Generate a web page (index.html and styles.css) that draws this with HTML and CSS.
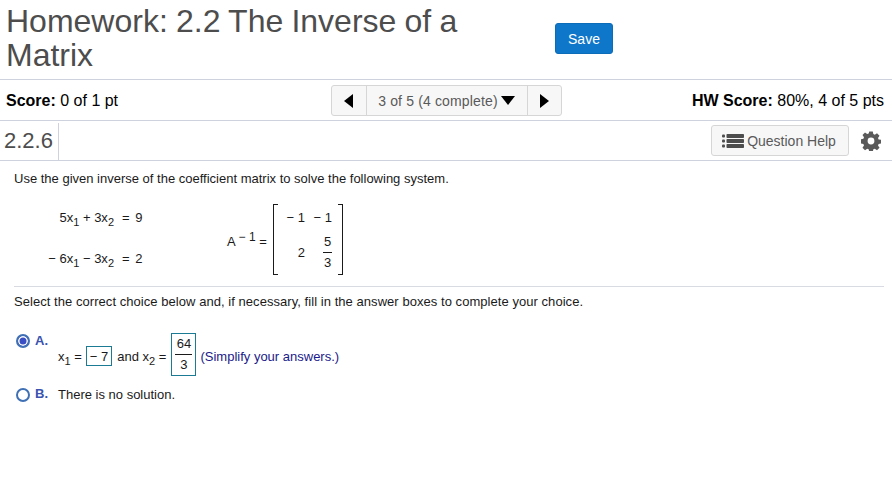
FILE: index.html
```html
<!DOCTYPE html>
<html lang="en">
<head>
    <meta charset="UTF-8">
    <title>Homework: 2.2 The Inverse of a Matrix</title>
    <link rel="stylesheet" href="styles.css">
</head>
<body>
    <div class="title-bar">
        <h1 class="hw-title">Homework: 2.2 The Inverse of a Matrix</h1>
        <button class="save-btn">Save</button>
    </div>
    <div class="score-bar">
        <div class="score"><b>Score:</b> 0 of 1 pt</div>
        <div class="pager">
            <button class="pager-btn"><svg width="9" height="14" viewBox="0 0 9 14"><path d="M9 0V14L0 7Z" fill="#000"/></svg></button>
            <button class="pager-mid">3 of 5 (4 complete)<svg width="14" height="9" viewBox="0 0 14 9"><path d="M0 0H14L7 9Z" fill="#000"/></svg></button>
            <button class="pager-btn"><svg width="9" height="14" viewBox="0 0 9 14"><path d="M0 0V14L9 7Z" fill="#000"/></svg></button>
        </div>
        <div class="score hw-score"><b>HW Score:</b> 80%, 4 of 5 pts</div>
    </div>
    <div class="question-bar">
        <div class="question-num">2.2.6</div>
        <button class="help-btn">
            <svg width="22" height="14" viewBox="0 0 22 14" fill="#4d4d4d">
                <rect x="0" y="0.5" width="3" height="3" rx="1"/>
                <rect x="0" y="5.5" width="3" height="3" rx="1"/>
                <rect x="0" y="10.5" width="3" height="3" rx="1"/>
                <rect x="4.5" y="0" width="17.5" height="4" rx="0.8"/>
                <rect x="4.5" y="5" width="17.5" height="4" rx="0.8"/>
                <rect x="4.5" y="10" width="17.5" height="4" rx="0.8"/>
            </svg>
            Question Help
        </button>
        <svg class="gear" width="20" height="20" viewBox="0 0 20 20">
            <path fill="#5a5a5a" fill-rule="evenodd" d="M8.2 0.5h3.6l0.5 2.6 1.5 0.6 2.2-1.5 2.5 2.5-1.5 2.2 0.6 1.5 2.6 0.5v3.6l-2.6 0.5-0.6 1.5 1.5 2.2-2.5 2.5-2.2-1.5-1.5 0.6-0.5 2.6H8.2l-0.5-2.6-1.5-0.6-2.2 1.5-2.5-2.5 1.5-2.2-0.6-1.5-2.6-0.5V8.2l2.6-0.5 0.6-1.5-1.5-2.2 2.5-2.5 2.2 1.5 1.5-0.6ZM10 6.6a3.4 3.4 0 1 0 0 6.8a3.4 3.4 0 1 0 0-6.8Z"/>
        </svg>
    </div>
    <div class="content">
        <p class="prompt">Use the given inverse of the coefficient matrix to solve the following system.</p>
        <div class="given">
            <div class="system">
                <div class="eq"><span class="lhs">5x<sub>1</sub> + 3x<sub>2</sub></span><span class="rhs">= 9</span></div>
                <div class="eq"><span class="lhs">&minus; 6x<sub>1</sub> &minus; 3x<sub>2</sub></span><span class="rhs">= 2</span></div>
            </div>
            <div class="inverse">
                <span class="a-label">A <sup>&minus; 1</sup> =</span>
                <div class="matrix">
                    <span class="cell">&minus; 1</span>
                    <span class="cell">&minus; 1</span>
                    <span class="cell">2</span>
                    <span class="frac"><span class="num">5</span><span>3</span></span>
                </div>
            </div>
        </div>
        <p class="prompt select">Select the correct choice below and, if necessary, fill in the answer boxes to complete your choice.</p>
        <div class="choice choice-a">
            <span class="radio checked"></span>
            <span class="letter">A.</span>
            <div class="answer">
                <span>x<sub>1</sub> =</span>
                <span class="box box-first">&minus; 7</span>
                <span>and x<sub>2</sub> =</span>
                <span class="box box-frac"><span class="num">64</span><span>3</span></span>
                <span class="hint">(Simplify your answers.)</span>
            </div>
        </div>
        <div class="choice choice-b">
            <span class="radio"></span>
            <span class="letter">B.</span>
            <span class="choice-text">There is no solution.</span>
        </div>
    </div>
</body>
</html>
```

FILE: styles.css
```css
body {
    margin: 0;
    background: #fff;
    color: #000;
    font-family: "Liberation Sans", Arial, sans-serif;
}
button {
    font-family: inherit;
    cursor: pointer;
}
.title-bar {
    height: 79px;
    display: flex;
    align-items: flex-start;
    border-bottom: 1px solid #cdd2de;
}
.hw-title {
    width: 480px;
    margin: 4px 0 0 6px;
    font-size: 32px;
    line-height: 34px;
    font-weight: normal;
    word-spacing: -0.7px;
    color: #4d4d4d;
}
.save-btn {
    margin: 23px 0 0 69px;
    width: 58px;
    height: 31px;
    background: #0f77c9;
    border: 1px solid #0d6cb8;
    border-radius: 3px;
    color: #fff;
    font-size: 14px;
}
.score-bar {
    height: 39px;
    display: flex;
    align-items: center;
    padding: 1px 8px 0 6px;
    border-bottom: 1px solid #cdd2de;
}
.score {
    width: 325px;
    flex: none;
    font-size: 16px;
}
.hw-score {
    flex: 1;
    width: auto;
    text-align: right;
}
.pager {
    display: flex;
    height: 31px;
    width: 231px;
    flex: none;
    border: 1px solid #d6d6d6;
    border-radius: 3px;
    background: #f7f7f7;
    box-sizing: border-box;
}
.pager button {
    border: none;
    background: none;
    padding: 0;
    display: flex;
    align-items: center;
    justify-content: center;
}
.pager .pager-btn {
    flex: 1;
}
.pager .pager-mid {
    flex: none;
    width: 162px;
    gap: 3px;
    border-left: 1px solid #d6d6d6;
    border-right: 1px solid #d6d6d6;
    color: #5a5a5a;
    font-size: 14px;
    letter-spacing: 0.15px;
}
.question-bar {
    height: 39px;
    display: flex;
    align-items: center;
    border-bottom: 1px solid #cdd2de;
}
.question-num {
    width: 54px;
    height: 37px;
    padding-left: 4px;
    border-right: 1px solid #cdd2de;
    margin-top: 2px;
    font-size: 22px;
    line-height: 36px;
    color: #4d4d4d;
}
.help-btn {
    margin-left: auto;
    width: 138px;
    height: 31px;
    display: flex;
    align-items: center;
    justify-content: center;
    gap: 3px;
    padding: 0 2px 0 0;
    background: #f7f7f7;
    border: 1px solid #d6d6d6;
    border-radius: 3px;
    color: #5a5a5a;
    font-size: 14px;
}
.gear {
    margin: 0 11px 0 12px;
}
.content {
    padding: 0 8px 0 14px;
    font-size: 13px;
    color: #1a1a1a;
}
.prompt {
    margin: 0;
    line-height: 14px;
}
.content > .prompt:first-child {
    padding-top: 11px;
}
sub {
    font-size: 11px;
    line-height: 0;
    vertical-align: -4px;
}
sup {
    font-size: 12px;
    line-height: 0;
    vertical-align: 5px;
}
.given {
    height: 86px;
    margin-top: 14px;
    display: flex;
    align-items: flex-start;
    border-bottom: 1px solid #d9dbe3;
}
.system {
    width: 213px;
    flex: none;
    padding-top: 10px;
}
.eq {
    height: 41px;
    display: flex;
}
.lhs {
    width: 100px;
    text-align: right;
}
.rhs {
    margin-left: 8px;
    word-spacing: 2px;
}
.inverse {
    display: flex;
    align-items: center;
    margin-top: 4px;
}
.a-label {
    width: 46px;
    flex: none;
    margin-top: 3px;
    white-space: nowrap;
}
.matrix {
    width: 70px;
    height: 71px;
    box-sizing: border-box;
    padding-right: 11px;
    display: grid;
    grid-template-columns: 32px 27px;
    grid-template-rows: 26px 45px;
    align-items: center;
    justify-items: end;
    background:
        linear-gradient(#1a1a1a, #1a1a1a) left top / 1px 100% no-repeat,
        linear-gradient(#1a1a1a, #1a1a1a) left top / 5px 1px no-repeat,
        linear-gradient(#1a1a1a, #1a1a1a) left bottom / 5px 1px no-repeat,
        linear-gradient(#1a1a1a, #1a1a1a) right top / 1px 100% no-repeat,
        linear-gradient(#1a1a1a, #1a1a1a) right top / 5px 1px no-repeat,
        linear-gradient(#1a1a1a, #1a1a1a) right bottom / 5px 1px no-repeat;
}
.cell {
    white-space: nowrap;
}
.frac {
    display: flex;
    flex-direction: column;
    align-items: center;
    width: 9px;
    line-height: 20px;
}
.num {
    border-bottom: 1px solid #1a1a1a;
    align-self: stretch;
    text-align: center;
}
.select {
    margin-top: 8px;
    letter-spacing: 0.05px;
}
.choice {
    display: flex;
    padding-left: 2px;
}
.radio {
    width: 10px;
    height: 10px;
    border: 2px solid #3f6fb5;
    border-radius: 50%;
    background: #fff;
    flex: none;
    margin-right: 5px;
}
.radio.checked {
    background: #3b4fc4;
    box-shadow: inset 0 0 0 1.5px #fff;
}
.letter {
    color: #3a52b0;
    font-weight: bold;
    width: 23px;
    flex: none;
    line-height: 14px;
}
.choice-a {
    margin-top: 25px;
    height: 54px;
}
.answer {
    display: flex;
    align-items: center;
    gap: 4px;
    height: 46px;
    margin-top: -1px;
}
.box {
    border: 1px solid #1b7a94;
    padding: 0 3px;
    height: 20px;
    box-sizing: border-box;
    display: flex;
    align-items: center;
    white-space: nowrap;
}
.box-first {
    margin-right: 1px;
}
.box-frac {
    height: 43px;
    width: 25px;
    margin: 0 0 3px 1px;
    flex-direction: column;
    justify-content: center;
    align-items: stretch;
    line-height: 20px;
    text-align: center;
}
.hint {
    color: #1a1a8a;
}
.choice-b .letter, .choice-text {
    margin-top: -1px;
}
```
